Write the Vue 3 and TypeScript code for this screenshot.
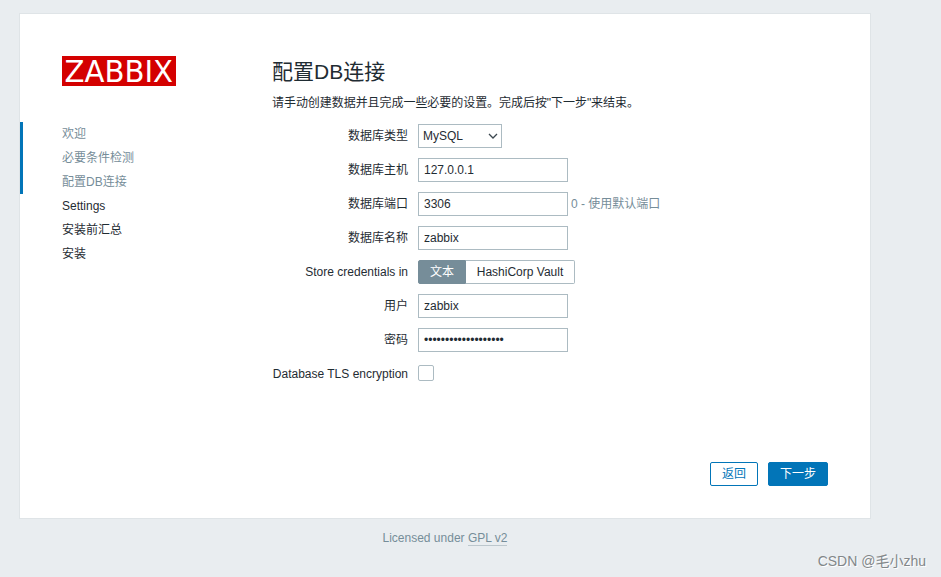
<script setup lang="ts">
import { ref } from 'vue'

interface Step {
  label: string
  reached: boolean
}

const steps: Step[] = [
  { label: '欢迎', reached: true },
  { label: '必要条件检测', reached: true },
  { label: '配置DB连接', reached: true },
  { label: 'Settings', reached: false },
  { label: '安装前汇总', reached: false },
  { label: '安装', reached: false },
]

const dbType = ref('MySQL')
const host = ref('127.0.0.1')
const port = ref('3306')
const dbName = ref('zabbix')
const storage = ref('文本')
const storageOptions = ['文本', 'HashiCorp Vault']
const user = ref('zabbix')
const password = ref('zabbixdatabase12345')
const tls = ref(false)
</script>

<template>
  <div class="page">
    <main class="card">
      <aside class="side">
        <svg class="logo" width="114" height="30" viewBox="0 0 114 30" role="img" aria-label="ZABBIX">
          <rect width="114" height="30" fill="#d40000" />
          <text x="2.5" y="26" textLength="108.5" lengthAdjust="spacingAndGlyphs" class="logo-text">ZABBIX</text>
        </svg>
        <ul class="steps">
          <li v-for="step in steps" :key="step.label" :class="{ reached: step.reached }">{{ step.label }}</li>
        </ul>
      </aside>

      <section class="body">
        <h1>配置DB连接</h1>
        <p class="intro">请手动创建数据并且完成一些必要的设置。完成后按"下一步"来结束。</p>

        <form class="form" @submit.prevent>
          <label for="type">数据库类型</label>
          <div class="field">
            <div class="select">
              <select id="type" v-model="dbType">
                <option>MySQL</option>
                <option>PostgreSQL</option>
              </select>
              <svg class="chevron" width="10" height="6" viewBox="0 0 10 6">
                <path d="M1 1l4 4 4-4" fill="none" stroke="#3c4850" stroke-width="1.3" />
              </svg>
            </div>
          </div>

          <label for="host">数据库主机</label>
          <div class="field"><input id="host" v-model="host" class="text" type="text" /></div>

          <label for="port">数据库端口</label>
          <div class="field">
            <input id="port" v-model="port" class="text" type="text" />
            <span class="hint">0 - 使用默认端口</span>
          </div>

          <label for="name">数据库名称</label>
          <div class="field"><input id="name" v-model="dbName" class="text" type="text" /></div>

          <label>Store credentials in</label>
          <div class="field">
            <div class="segmented">
              <button
                v-for="option in storageOptions"
                :key="option"
                type="button"
                :class="{ active: storage === option }"
                @click="storage = option"
              >{{ option }}</button>
            </div>
          </div>

          <label for="user">用户</label>
          <div class="field"><input id="user" v-model="user" class="text" type="text" /></div>

          <label for="password">密码</label>
          <div class="field"><input id="password" v-model="password" class="text" type="password" /></div>

          <label for="tls">Database TLS encryption</label>
          <div class="field"><input id="tls" v-model="tls" class="check" type="checkbox" /></div>
        </form>

        <div class="actions">
          <button type="button" class="btn">返回</button>
          <button type="button" class="btn primary">下一步</button>
        </div>
      </section>
    </main>

    <footer class="footer">Licensed under <a>GPL v2</a></footer>
    <div class="watermark">CSDN @毛小zhu</div>
  </div>
</template>

<style>
body {
  background: #e9edf0;
}
</style>

<style scoped>
.page,
.page * {
  box-sizing: border-box;
}

.page {
  position: relative;
  width: 941px;
  height: 577px;
  padding: 13px 0 0 19px;
  overflow: hidden;
  background: #e9edf0;
  color: #1f2c33;
  font: 12px/24px "Liberation Sans", "Noto Sans CJK SC", sans-serif;
}

.page button,
.page input,
.page select {
  margin: 0;
  color: inherit;
  font-family: inherit;
  font-size: 12px;
}

.card {
  display: flex;
  width: 852px;
  height: 506px;
  background: #fff;
  border: 1px solid #dfe4e7;
}

.side {
  width: 252px;
  padding-top: 42px;
}

.logo {
  display: block;
  margin-left: 42px;
  overflow: visible;
}

.logo-text {
  fill: #fff;
  font: 30px "DejaVu Sans", sans-serif;
}

.steps {
  margin: 36px 0 0;
  padding: 0;
  list-style: none;
}

.steps li {
  height: 24px;
  padding-left: 39px;
  border-left: 3px solid transparent;
}

.steps .reached {
  border-left-color: #0275b8;
  color: #768d99;
}

.body {
  display: flex;
  flex: 1;
  flex-direction: column;
  padding: 42px 42px 32px 0;
}

h1 {
  margin: 0;
  font-size: 21px;
  font-weight: 400;
  line-height: 32px;
}

.intro {
  margin: 3px 0 0;
  letter-spacing: -0.05px;
}

.form {
  display: grid;
  grid-template-columns: 136px 1fr;
  grid-auto-rows: 24px;
  gap: 10px;
  margin-top: 9px;
}

.form > label {
  text-align: right;
  white-space: nowrap;
}

.field {
  display: flex;
  align-items: center;
}

.text {
  width: 150px;
  height: 24px;
  padding: 0 5px;
  border: 1px solid #acbbc2;
  border-radius: 0;
  background: #fff;
  outline: none;
}

.hint {
  margin-left: 3px;
  color: #768d99;
}

.select {
  position: relative;
  width: 84px;
  height: 24px;
}

.select select {
  width: 100%;
  height: 24px;
  padding: 0 16px 0 4px;
  border: 1px solid #acbbc2;
  border-radius: 0;
  background: #fff;
  appearance: none;
}

.chevron {
  position: absolute;
  top: 9px;
  right: 4px;
  pointer-events: none;
}

.segmented {
  display: flex;
}

.segmented button {
  width: 109px;
  height: 24px;
  padding: 0;
  border: 1px solid #acbbc2;
  border-left: 0;
  border-radius: 0 2px 2px 0;
  background: #fff;
  line-height: 22px;
}

.segmented button:first-child {
  width: 48px;
  border: 1px solid #768d99;
  border-radius: 2px 0 0 2px;
}

.page .segmented .active {
  background: #768d99;
  color: #fff;
}

.page .check {
  width: 16px;
  height: 16px;
  margin-bottom: 2px;
  border: 1px solid #acbbc2;
  border-radius: 2px;
  background: #fff;
  appearance: none;
}

.actions {
  display: flex;
  justify-content: flex-end;
  gap: 10px;
  margin-top: auto;
}

.page .btn {
  width: 48px;
  height: 24px;
  padding: 1px 0 0;
  border: 1px solid #0275b8;
  border-radius: 2px;
  background: #fff;
  color: #0275b8;
  line-height: 21px;
}

.page .btn.primary {
  width: 60px;
  background: #0275b8;
  color: #fff;
}

.footer {
  width: 852px;
  margin-top: 7px;
  color: #768d99;
  text-align: center;
}

.footer a {
  display: inline-block;
  border-bottom: 1px solid #bcc7cd;
  line-height: 14px;
}

.watermark {
  position: absolute;
  top: 549px;
  right: 15px;
  color: #828789;
  font-size: 14px;
  text-shadow: 1px 1px 0 #fff;
  white-space: nowrap;
}
</style>
